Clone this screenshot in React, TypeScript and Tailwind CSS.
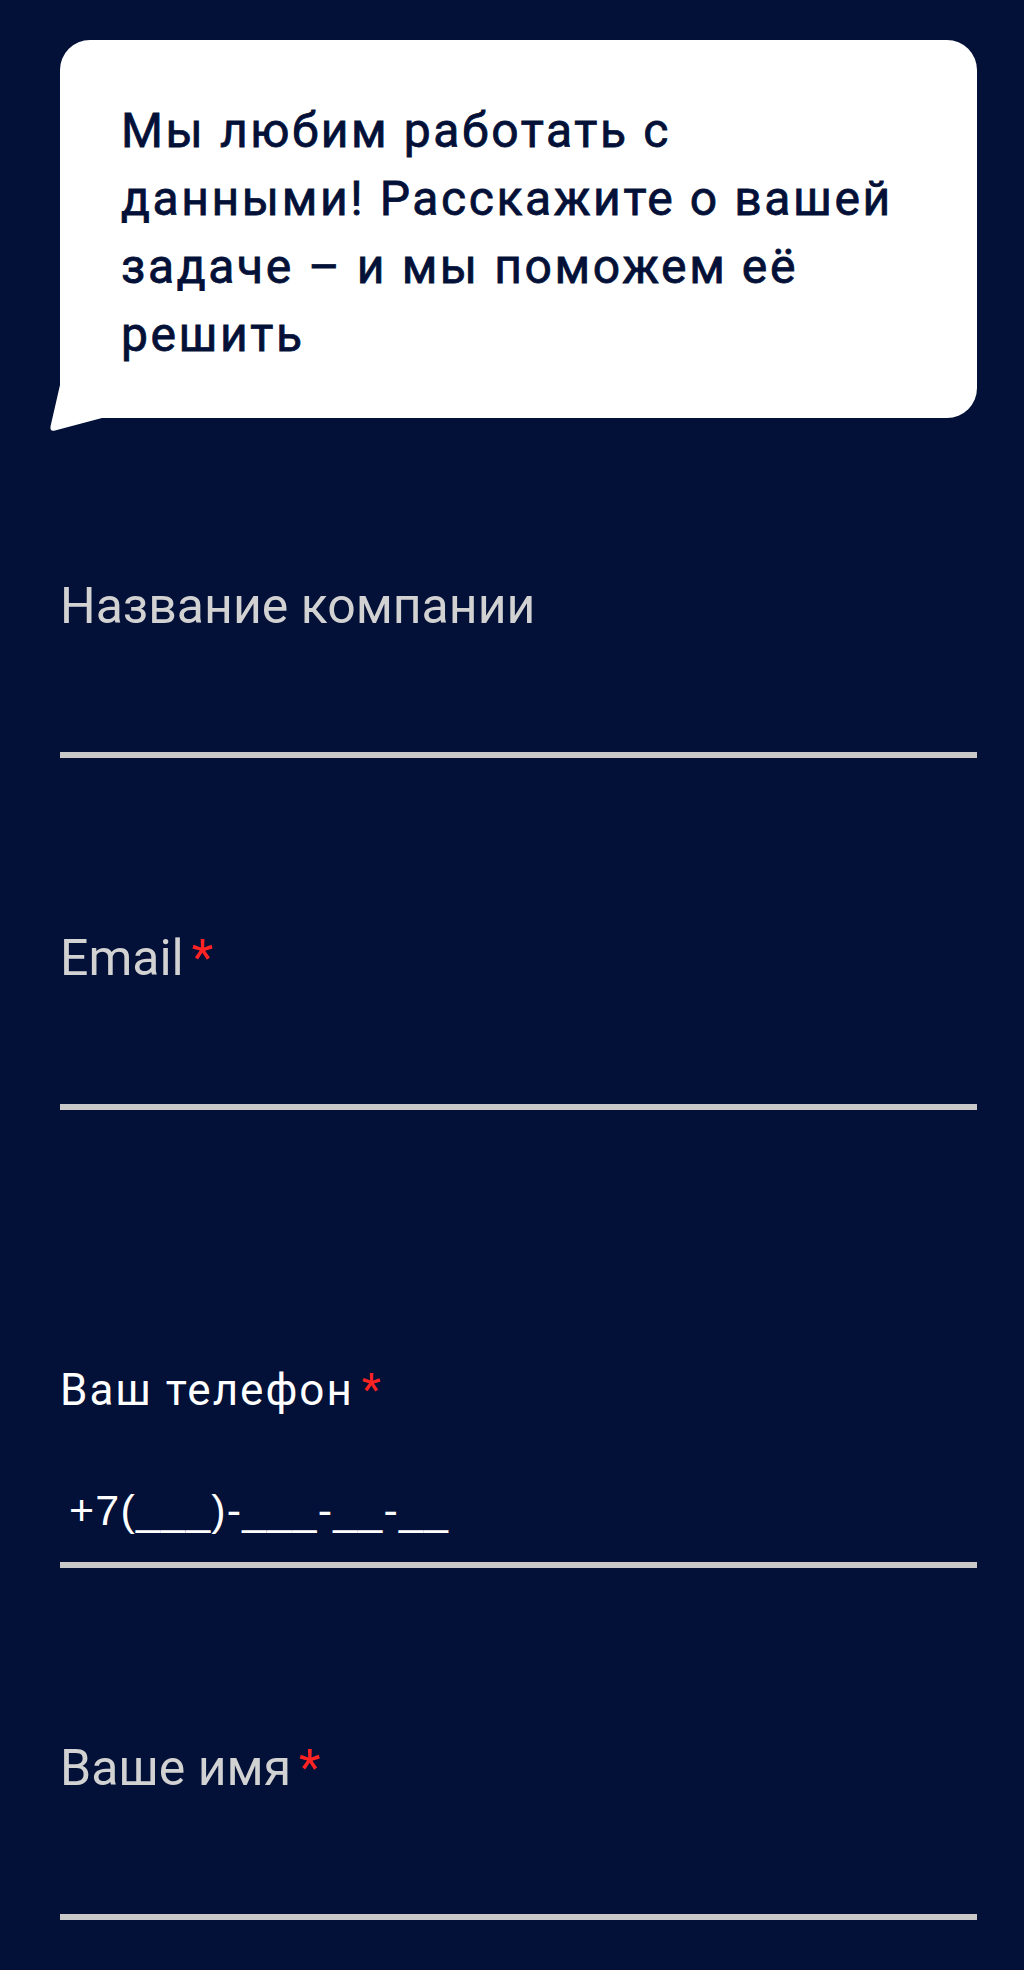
import React from "react";

function Star() {
  return <span className="ml-[8px] tracking-normal text-[#ff2323] font-['Roboto',sans-serif]">*</span>;
}

export default function App() {
  return (
    <div className="min-h-[1970px] w-full bg-[#031037] pl-[60px] pr-[47px] pt-[40px] pb-[40px] font-['Roboto',sans-serif]">
      <div className="relative h-[378px] rounded-[30px] rounded-bl-none bg-white pl-[61px] pr-[30px] pt-[57px]">
        <p className="text-[48px] font-normal leading-[68px] tracking-[2.6px] text-[#031037] [-webkit-text-stroke:0.8px_#031037] font-['Roboto',sans-serif]">
          Мы любим работать с
          <br />
          данными! Расскажите о вашей
          <br />
          задаче – и мы поможем её
          <br />
          решить
        </p>
        <svg
          className="absolute left-[-12px] top-[330px] h-[64px] w-[60px]"
          viewBox="0 0 60 64"
        >
          <path d="M12 0 L12 15 L2.6 56 Q1.5 62 7 60.5 L54 48 L54 0 Z" fill="#ffffff" />
        </svg>
      </div>

      <div className="mt-[158px] border-b-[6px] border-[#c9c9c9] pb-[116px]">
        <div className="h-[60px] text-[50px] leading-[60px] text-[#d2d2d2]">Название компании</div>
      </div>

      <div className="mt-[170px] border-b-[6px] border-[#c9c9c9] pb-[116px]">
        <div className="h-[60px] text-[50px] leading-[60px] text-[#d2d2d2]">
          Email
          <Star />
        </div>
      </div>

      <div className="mt-[170px] border-b-[6px] border-[#c9c9c9] pt-[85px] pb-[27px]">
        <div className="h-[50px] text-[44px] leading-[50px] tracking-[2px] text-white">
          Ваш телефон
          <Star />
        </div>
        <div className="mt-[70px] h-[50px] pl-[9px] text-[43px] leading-[50px] tracking-[1.2px] text-white font-['Liberation_Sans',sans-serif]">
          +7(___)-___-__-__
        </div>
      </div>

      <div className="mt-[170px] border-b-[6px] border-[#c9c9c9] pb-[116px]">
        <div className="h-[60px] text-[50px] leading-[60px] text-[#d2d2d2]">
          Ваше имя
          <Star />
        </div>
      </div>
    </div>
  );
}
